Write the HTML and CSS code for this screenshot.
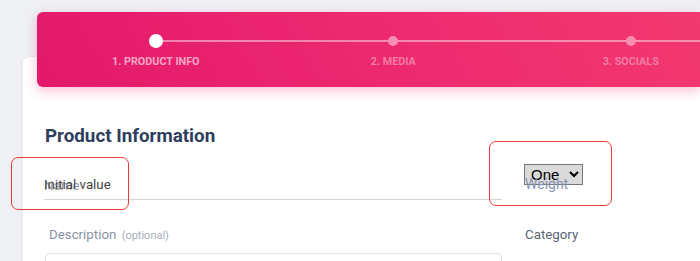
FILE: index.html
```html
<!DOCTYPE html>
<html>
<head>
<meta charset="utf-8">
<link rel="stylesheet" href="styles.css">
</head>
<body>
<div class="page">
  <div class="card">
    <div class="wizard">
      <div class="track"></div>
      <div class="step active"><span class="dot"></span><span class="label">1. Product Info</span></div>
      <div class="step"><span class="dot"></span><span class="label">2. Media</span></div>
      <div class="step"><span class="dot"></span><span class="label">3. Socials</span></div>
    </div>
    <div class="body">
      <h2 class="title">Product Information</h2>
      <div class="row">
        <div class="col-left">
          <div class="field">
            <input class="line-input" type="text" value="Initial value">
            <label class="float-label">Name</label>
          </div>
        </div>
        <div class="col-right">
          <div class="weight">
            <select class="sel"><option>One</option><option>Two</option></select>
            <label class="weight-label">Weight</label>
          </div>
        </div>
      </div>
      <div class="row row2">
        <div class="col-left">
          <div class="desc-label">Description <span class="opt">(optional)</span></div>
          <div class="textarea"></div>
        </div>
        <div class="col-right">
          <div class="cat-label">Category</div>
        </div>
      </div>
    </div>
  </div>
  <div class="mark mark1"></div>
  <div class="mark mark2"></div>
</div>
</body>
</html>
```
FILE: styles.css
```css
html, body {
  margin: 0;
  padding: 0;
  background: #eef0f3;
  font-family: Roboto, "Liberation Sans", sans-serif;
  overflow: hidden;
}
.page {
  position: relative;
  width: 700px;
  height: 261px;
  padding: 57px 0 0 23px;
  box-sizing: border-box;
  overflow: hidden;
}
.card {
  display: flow-root;
  width: 677px;
  height: 204px;
  background: #fff;
  border-radius: 6px 0 0 0;
  box-shadow: 0 1px 4px rgba(0,0,0,0.06);
}
.wizard {
  position: relative;
  margin: -45px 0 0 14px;
  height: 75px;
  width: 663px;
  border-radius: 6px 0 0 6px;
  background: linear-gradient(60deg, #e3186a 0%, #ee2c70 60%, #f2386f 100%);
  box-shadow: 0 4px 12px rgba(233, 30, 99, 0.28);
  display: grid;
  grid-template-columns: repeat(3, 237.5px);
}
.track {
  position: absolute;
  left: 119px;
  right: 0;
  top: 28px;
  height: 2px;
  background: rgba(255,255,255,0.45);
}
.step {
  display: flex;
  flex-direction: column;
  align-items: center;
  padding-top: 24px;
  position: relative;
}
.dot {
  width: 10px;
  height: 10px;
  border-radius: 50%;
  background: #f78db2;
}
.step.active .dot {
  width: 14px;
  height: 14px;
  background: #fff;
  margin-top: -2px;
}
.label {
  margin-top: 9px;
  font-size: 10.8px;
  font-weight: 700;
  text-transform: uppercase;
  color: #f47aa5;
  white-space: nowrap;
}
.step.active .label {
  margin-top: 7px;
  color: #f7a6c5;
}
.body {
  padding: 38px 0 0 22px;
}
.title {
  margin: 0;
  font-size: 18.8px;
  line-height: 22px;
  font-weight: 700;
  color: #2e3d5b;
}
.row {
  display: flex;
  gap: 22px;
}
.col-left {
  width: 457px;
}
.col-right {
  width: 150px;
}
.field {
  position: relative;
  margin-top: 27px;
  height: 25px;
  border-bottom: 1px solid #d4d4d4;
  margin-left: -1px;
}
.line-input {
  border: 0;
  outline: 0;
  padding: 0;
  margin: 0;
  background: transparent;
  font-family: Roboto, "Liberation Sans", sans-serif;
  font-size: 13.3px;
  color: #444;
  height: 20px;
  width: 100%;
  position: relative;
  z-index: 1;
}
.float-label {
  position: absolute;
  left: 0;
  top: 4px;
  font-size: 13.3px;
  color: #9aa1ac;
}
.weight {
  position: relative;
  margin-top: 17px;
}
.sel {
  width: 59px;
  height: 21px;
  font-family: "Liberation Sans", Arial, sans-serif;
  font-size: 15px;
  background-color: #dadada;
  border: 1px solid #777;
  border-radius: 0;
  padding: 0 0 0 2px;
  color: #000;
  margin: 0;
}
.weight-label {
  position: absolute;
  left: 1px;
  top: 12px;
  font-size: 14px;
  color: #8b95b3;
}
.row2 {
  margin-top: 27px;
}
.desc-label {
  font-size: 13.3px;
  color: #8891a5;
  padding-left: 4px;
}
.opt {
  font-size: 11px;
  color: #a7adbb;
  margin-left: 2px;
}
.textarea {
  margin-top: 11px;
  height: 40px;
  border: 1px solid #e2e2e2;
  border-radius: 5px;
}
.cat-label {
  font-size: 13.3px;
  color: #5a6475;
  padding-left: 1px;
}
.mark {
  position: absolute;
  border: 1px solid #f03a3a;
  border-radius: 7px;
}
.mark1 {
  left: 11px;
  top: 157px;
  width: 116px;
  height: 51px;
}
.mark2 {
  left: 489px;
  top: 141px;
  width: 121px;
  height: 63px;
}
```
